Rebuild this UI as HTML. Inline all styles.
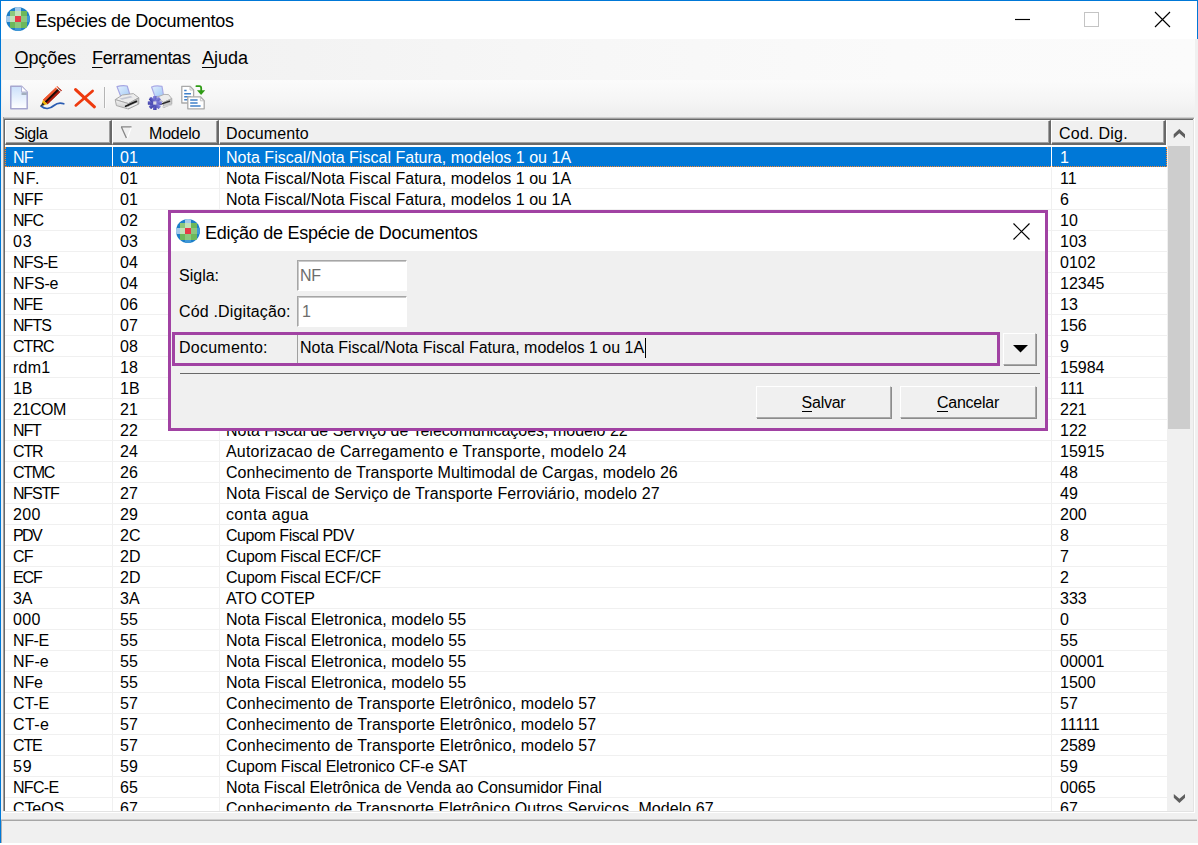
<!DOCTYPE html>
<html lang="pt-BR">
<head>
<meta charset="utf-8">
<title>Espécies de Documentos</title>
<style>
*{box-sizing:border-box;margin:0;padding:0}
html,body{width:1198px;height:845px;overflow:hidden;background:#fff}
body{position:relative;font-family:"Liberation Sans","DejaVu Sans",sans-serif;color:#000;font-size:16px}
.abs{position:absolute}
/* main window frame */
#frameL{left:0;top:0;width:1px;height:843px;background:#0078d7}
#frameT{left:0;top:0;width:1198px;height:1px;background:#0078d7}
#frameR{left:1197px;top:0;width:1px;height:39px;background:#0078d7}
#client{left:1px;top:39px;width:1197px;height:804px;background:#f0f0f0}
#title{left:35.5px;top:9px;height:24px;line-height:24px;font-size:18px;white-space:nowrap;letter-spacing:-0.27px}
#menubar{left:2px;top:39px;width:1193px;height:41px;background:linear-gradient(90deg,#f0f0f0 0%,#f3f3f3 25%,#f7f7f7 50%,#fafafa 75%,#fbfbfb 100%)}
.mi{position:absolute;top:46px;height:24px;line-height:24px;font-size:18px;white-space:nowrap}
.mi u{text-decoration:underline;text-decoration-thickness:1px;text-underline-offset:3px}
#toolbar{left:2px;top:80px;width:1193px;height:37px;background:linear-gradient(180deg,#fbfbfb 0%,#f6f6f6 50%,#eeeeee 100%)}
/* grid */
#grid{left:3px;top:117px;width:1191px;height:695px;background:#fff;border-top:3px solid #696969;border-left:2px solid #696969;border-right:1px solid #fff;border-bottom:1px solid #fff;overflow:hidden}
#gridTop{left:3px;top:117px;width:1191px;height:2px;background:linear-gradient(#cfcfcf 0,#cfcfcf 50%,#a0a0a0 50%,#a0a0a0 100%)}
#gridLeft{left:3px;top:117px;width:1px;height:695px;background:#a0a0a0}
.hd{position:absolute;top:120px;height:25px;background:#f0f0f0;border-top:1px solid #fff;border-left:1px solid #fff;border-right:2px solid #696969;border-bottom:2px solid #696969;box-shadow:inset -1px -1px 0 #a0a0a0;font-size:16px;line-height:26px;white-space:nowrap;overflow:hidden}
.r{position:absolute;left:5px;width:1162px;height:21px;border-bottom:1px solid #f0f0f0;background:#fff;white-space:nowrap}
.c{position:absolute;top:0;height:20px;line-height:22px;font-size:16px;overflow:hidden;white-space:nowrap;padding-left:9px}
.c1{left:0;width:107px;letter-spacing:-0.5px;padding-left:8px}
.c2{left:107px;width:107px;border-left:1px solid #f0f0f0;padding-left:7px}
.c3{left:214px;width:832px;border-left:1px solid #f0f0f0;padding-left:6px}
.c4{left:1046px;width:116px;border-left:1px solid #f0f0f0;padding-left:8px}
.sel{background:#0078d7;color:#fff;border-bottom:1px solid #fff}
.sel .c{border-left-color:#fff}
.sel:after{content:"";position:absolute;left:0;top:0;right:0;bottom:0;border:1px dotted #ff8728;border-top:none;pointer-events:none}
#sbar{left:1167px;top:120px;width:26px;height:691px;background:#f0f0f0}
#thumb{left:1168px;top:146px;width:22px;height:283px;background:#cdcdcd}
#status{left:1px;top:819px;width:1196px;height:24px;background:#f0f0f0;border-top:2px solid #a6a6a6;border-left:1px solid #b0b0b0}
#statusTop{left:1px;top:819px;width:1196px;height:1px;background:#cfcfcf}
/* dialog */
#dlg{left:168px;top:210px;width:880px;height:221px;background:#f0f0f0;border:3px solid #a142a3}
#dtitlebar{left:171px;top:213px;width:874px;height:38px;background:#fff}
#dtitle{left:205px;top:221px;height:24px;line-height:24px;font-size:18px;white-space:nowrap;letter-spacing:-0.25px}
.lbl{position:absolute;left:179px;height:20px;line-height:20px;font-size:16px;white-space:nowrap}
.inp{position:absolute;left:297px;width:110px;height:31px;background:#fff;border-top:1px solid #a6a6a6;border-left:1px solid #a6a6a6;border-right:1px solid #fff;border-bottom:1px solid #fff;box-shadow:inset 1px 1px 0 #c9c9c9;font-size:16px;line-height:29px;color:#6d6d6d;padding-left:3px}
#docbox{left:172px;top:332px;width:828px;height:34px;border:3px solid #a142a3;background:#f0f0f0}
#docdiv{left:297px;top:335px;width:1px;height:28px;background:#a0a0a0}
#doctext{left:300px;top:337px;height:22px;line-height:22px;font-size:16px;white-space:nowrap}
#caret{left:645px;top:338px;width:1px;height:20px;background:#000}
#ddbtn{left:1003px;top:333px;width:33px;height:32px;background:#f0f0f0;border-top:1px solid #fff;border-left:1px solid #fff;border-right:1px solid #a8a8a8;border-bottom:1px solid #a8a8a8;box-shadow:1px 1px 0 #8c8c8c}
#hline{left:180px;top:373px;width:860px;height:1px;background:#696969}
.btn{position:absolute;top:386px;height:32px;background:#f0f0f0;border-top:1px solid #fff;border-left:1px solid #fff;border-right:1px solid #a8a8a8;border-bottom:1px solid #a8a8a8;box-shadow:1px 1px 0 #8c8c8c;letter-spacing:-0.25px;font-size:16px;line-height:31px;text-align:center;white-space:nowrap}
.btn u{text-decoration:none;border-bottom:1px solid #000}
</style>
</head>
<body>
<div class="abs" id="client"></div>
<div class="abs" id="frameT"></div>
<div class="abs" id="frameL"></div>
<div class="abs" id="frameR"></div>

<!-- title bar -->
<svg class="abs" style="left:6px;top:7px" width="24" height="24" viewBox="0 0 24 24">
 <defs><clipPath id="gc"><circle cx="12" cy="12" r="12"/></clipPath></defs>
 <g clip-path="url(#gc)">
  <rect x="0" y="0" width="24" height="24" fill="#1c7fc8"/>
  <rect x="9" y="0" width="6" height="4" fill="#a3c9ea"/>
  <rect x="0" y="9" width="4" height="6" fill="#a3c9ea"/>
  <rect x="21" y="9" width="3" height="6" fill="#3f97d6"/>
  <rect x="9" y="21" width="6" height="3" fill="#3f97d6"/>
  <rect x="4" y="4" width="5" height="5" fill="#8cc77c"/>
  <rect x="9" y="4" width="6" height="5" fill="#c1e2ba"/>
  <rect x="15" y="4" width="6" height="5" fill="#6db85a"/>
  <rect x="4" y="9" width="5" height="6" fill="#c1e2ba"/>
  <rect x="9" y="9" width="6" height="6" fill="#e63a46"/>
  <rect x="15" y="9" width="6" height="6" fill="#8cc77c"/>
  <rect x="4" y="15" width="5" height="6" fill="#6db85a"/>
  <rect x="9" y="15" width="6" height="6" fill="#8cc77c"/>
  <rect x="15" y="15" width="6" height="6" fill="#6db85a"/>
 </g>
</svg>
<div class="abs" id="title">Espécies de Documentos</div>
<!-- caption buttons -->
<svg class="abs" style="left:1010px;top:8px" width="170" height="24" viewBox="0 0 170 24">
 <line x1="5" y1="11.5" x2="20" y2="11.5" stroke="#000" stroke-width="1.15"/>
 <rect x="74.5" y="4.5" width="14" height="14" fill="none" stroke="#c4c4c4" stroke-width="1"/>
 <path d="M145 4 L160 19 M160 4 L145 19" stroke="#000" stroke-width="1.15" fill="none"/>
</svg>

<!-- menu bar -->
<div class="abs" id="menubar"></div>
<div class="mi" style="left:14.5px;letter-spacing:-0.1px"><u>O</u>pções</div>
<div class="mi" style="left:92px;letter-spacing:-0.33px"><u>F</u>erramentas</div>
<div class="mi" style="left:202px"><u>A</u>juda</div>

<!-- toolbar -->
<div class="abs" id="toolbar"></div>
<!--TB0-->
<svg class="abs" style="left:0;top:80px" width="220" height="37" viewBox="0 80 220 37">
 <defs>
  <linearGradient id="gdoc" x1="0" y1="0" x2="0" y2="1"><stop offset="0" stop-color="#cbe0fb"/><stop offset="1" stop-color="#ffffff"/></linearGradient>
  <linearGradient id="gpap" x1="0" y1="0" x2="1" y2="1"><stop offset="0" stop-color="#e4f0fd"/><stop offset="1" stop-color="#9ec7f6"/></linearGradient>
  <linearGradient id="gprn" x1="0" y1="0" x2="0" y2="1"><stop offset="0" stop-color="#f4f4f4"/><stop offset="1" stop-color="#c9c9c9"/></linearGradient>
  <linearGradient id="ggear" x1="0" y1="0" x2="1" y2="1"><stop offset="0" stop-color="#8e8ee6"/><stop offset="1" stop-color="#3838a4"/></linearGradient>
 </defs>
 <!-- new document -->
 <path d="M10.8 86.3 H21.5 L27.2 92 V108.7 H10.8 Z" fill="url(#gdoc)" stroke="#a6a6cf" stroke-width="1.5" stroke-linejoin="round"/>
 <path d="M21.5 86.5 V92 H27" fill="#fff" stroke="#b4b4d6" stroke-width="1"/>
 <path d="M21.5 92.6 H26.6 V95 H21.5 Z" fill="#8f9ba8" opacity="0.75"/>
 <!-- pencil -->
 <g>
  <path d="M41 106 C45 109.5 50 109 54 105.5 C57 103 60.5 102.6 63.8 103.8" fill="none" stroke="#2a5cb2" stroke-width="1.7" stroke-linecap="round"/>
  <path d="M57.2 86.2 L61.8 90.6 L47.6 104.2 L43 99.8 Z" fill="#dd3a1c"/>
  <path d="M57.2 86.2 L59 87.9 L44.8 101.5 L43 99.8 Z" fill="#f2582f"/>
  <path d="M60 88.9 L61.8 90.6 L47.6 104.2 L45.8 102.5 Z" fill="#a81e12"/>
  <path d="M58.6 89.3 L46 101.6" stroke="#1a0b08" stroke-width="2" stroke-linecap="round"/>
  <path d="M56.2 87.2 L60.8 91.6" stroke="#ffffff" stroke-width="1.1" opacity="0.9"/>
  <path d="M43 99.8 L47.6 104.2 L41.2 105.8 Z" fill="#f0b400"/>
  <path d="M42.6 102.6 L44.6 104.9 L40.6 106.2 Z" fill="#2b2b3a"/>
 </g>
 <!-- delete X -->
 <path d="M75.6 89.6 L94.4 106.8" stroke="#ee3a0e" stroke-width="3.1" stroke-linecap="round"/>
 <path d="M92.6 91 L75.8 105.4" stroke="#ee3a0e" stroke-width="2.7" stroke-linecap="round"/>
 <!-- separator -->
 <rect x="104" y="87" width="1" height="21" fill="#b5b5b5"/>
 <rect x="105" y="87" width="1" height="21" fill="#fbfbfb"/>
 <!-- printer -->
 <g>
  <path d="M117 86.6 Q122 85.2 127.2 86 L130.4 96.4 L121.6 98.6 Z" fill="url(#gpap)" stroke="#a5a5e2" stroke-width="1.2" stroke-linejoin="round"/>
  <path d="M115.2 99.6 L122.4 95 L133.4 93.6 L138.8 97.8 L128.4 103.6 Z" fill="#ececec" stroke="#a2a2a2" stroke-width="0.9" stroke-linejoin="round"/>
  <path d="M119.6 98.4 L130.6 96 L132.6 97.2 L122 99.8 Z" fill="#c3c6d2"/>
  <path d="M115.2 99.6 L128.4 103.6 V109 L116.4 105.6 Z" fill="url(#gprn)" stroke="#a2a2a2" stroke-width="0.9" stroke-linejoin="round"/>
  <path d="M128.4 103.6 L138.8 97.8 V104 L128.4 109 Z" fill="#c4c4c4" stroke="#a2a2a2" stroke-width="0.9" stroke-linejoin="round"/>
  <path d="M125.6 106.2 L136.4 101.4" stroke="#1c1c1c" stroke-width="1.7" stroke-linecap="round"/>
  <path d="M127.6 107.8 L136.6 103.6" stroke="#f3f3f3" stroke-width="1.2" stroke-linecap="round"/>
 </g>
 <!-- printer with gear -->
 <g>
  <path d="M151.6 87 Q156 85 162 86.4 L163.6 96 L155 96.6 Z" fill="url(#gpap)" stroke="#aaaae6" stroke-width="1.2" stroke-linejoin="round"/>
  <path d="M156.6 97.4 L164 94.4 L168.6 94.6 L171.8 98.6 L163.6 102.4 Z" fill="#ececec" stroke="#aaaaaa" stroke-width="0.9" stroke-linejoin="round"/>
  <path d="M163.6 102.4 L171.8 98.6 V104.2 L163.6 107.6 Z" fill="#cbcbcb" stroke="#aaaaaa" stroke-width="0.9" stroke-linejoin="round"/>
  <path d="M160.4 104.4 L169.6 101.2" stroke="#2a2a2a" stroke-width="1.5" stroke-linecap="round"/>
  <path d="M162.6 106.8 L171.6 105" stroke="#d8d8d8" stroke-width="1.2" stroke-linecap="round"/>
  <g transform="translate(154.8 103)">
   <g fill="url(#ggear)">
    <circle r="5"/>
    <rect x="-1.8" y="-7" width="3.6" height="14" rx="0.6"/>
    <rect x="-1.8" y="-7" width="3.6" height="14" rx="0.6" transform="rotate(45)"/>
    <rect x="-1.8" y="-7" width="3.6" height="14" rx="0.6" transform="rotate(90)"/>
    <rect x="-1.8" y="-7" width="3.6" height="14" rx="0.6" transform="rotate(135)"/>
   </g>
   <rect x="-1.6" y="-1.6" width="3.2" height="3.2" fill="#dcdce6"/>
  </g>
 </g>
 <!-- copy documents -->
 <g>
  <path d="M181.8 86.3 H190 L193.6 89.9 V103 H181.8 Z" fill="#fff" stroke="#a9a9a9" stroke-width="1.3" stroke-linejoin="round"/>
  <path d="M190 86.6 V90 H193.4" fill="none" stroke="#bdbdbd" stroke-width="0.9"/>
  <path d="M184.2 90.6 H186.6 M184.2 93.7 H191 M184.2 96.8 H191 M184.2 99.8 H191" stroke="#3f80c9" stroke-width="1.5"/>
  <path d="M187.8 96.8 H200.4 L204.2 100.6 V108.8 H187.8 Z" fill="#fff" stroke="#a9a9a9" stroke-width="1.3" stroke-linejoin="round"/>
  <path d="M200.4 97.2 V100.8 H204" fill="none" stroke="#bdbdbd" stroke-width="0.9"/>
  <path d="M190.2 99.9 H197.6 M190.2 102.9 H197.6 M190.2 105.9 H200.6" stroke="#3f80c9" stroke-width="1.5"/>
  <path d="M196.4 86.2 H199.4 Q201.2 86.2 201.2 88.2 V90.4" fill="none" stroke="#2e9b14" stroke-width="1.8" stroke-linecap="round"/>
  <path d="M197 90.2 H205.2 L201.1 95 Z" fill="#2e9b14"/>
 </g>
</svg>
<!--TB1-->

<!-- grid -->
<div class="abs" id="grid"></div>
<div class="abs" id="gridTop"></div>
<div class="abs" id="gridLeft"></div>
<div class="hd" style="left:5px;width:107px;padding-left:8px;letter-spacing:-0.45px">Sigla</div>
<div class="hd" style="left:112px;width:107px;padding-left:36px;letter-spacing:-0.2px">Modelo</div>
<div class="hd" style="left:219px;width:832px;padding-left:6px;letter-spacing:0.1px">Documento</div>
<div class="hd" style="left:1051px;width:115px;padding-left:7px;letter-spacing:0.25px">Cod. Dig.</div>
<svg class="abs" style="left:120px;top:126px" width="12" height="13" viewBox="0 0 12 13">
 <path d="M1 0.8 H11.5 M1.4 1 L6.4 12" stroke="#858585" stroke-width="1.3" fill="none"/>
 <path d="M11.2 1.8 L7.4 11.8" stroke="#fff" stroke-width="1.1" fill="none"/>
</svg>
<div id="rows">
<div class="r sel" style="top:147px"><span class="c c1" style="letter-spacing:-0.7px">NF</span><span class="c c2">01</span><span class="c c3" style="letter-spacing:0.02px">Nota Fiscal/Nota Fiscal Fatura, modelos 1 ou 1A</span><span class="c c4">1</span></div>
<div class="r" style="top:168px"><span class="c c1" style="letter-spacing:1.2px">NF.</span><span class="c c2">01</span><span class="c c3" style="letter-spacing:0.02px">Nota Fiscal/Nota Fiscal Fatura, modelos 1 ou 1A</span><span class="c c4">11</span></div>
<div class="r" style="top:189px"><span class="c c1" style="letter-spacing:-0.45px">NFF</span><span class="c c2">01</span><span class="c c3" style="letter-spacing:0.02px">Nota Fiscal/Nota Fiscal Fatura, modelos 1 ou 1A</span><span class="c c4">6</span></div>
<div class="r" style="top:210px"><span class="c c1" style="letter-spacing:-0.95px">NFC</span><span class="c c2">02</span><span class="c c3">Nota Fiscal de Venda a Consumidor, modelo 2</span><span class="c c4">10</span></div>
<div class="r" style="top:231px"><span class="c c1" style="letter-spacing:0.9px">03</span><span class="c c2">03</span><span class="c c3">Nota Fiscal de Entrada, modelo 3</span><span class="c c4">103</span></div>
<div class="r" style="top:252px"><span class="c c1" style="letter-spacing:-0.68px">NFS-E</span><span class="c c2">04</span><span class="c c3">Nota Fiscal de Produtor, modelo 4</span><span class="c c4">0102</span></div>
<div class="r" style="top:273px"><span class="c c1" style="letter-spacing:-0.18px">NFS-e</span><span class="c c2">04</span><span class="c c3">Nota Fiscal de Produtor, modelo 4</span><span class="c c4">12345</span></div>
<div class="r" style="top:294px"><span class="c c1" style="letter-spacing:-0.95px">NFE</span><span class="c c2">06</span><span class="c c3">Nota Fiscal/Conta de Energia Elétrica, modelo 6</span><span class="c c4">13</span></div>
<div class="r" style="top:315px"><span class="c c1" style="letter-spacing:-0.93px">NFTS</span><span class="c c2">07</span><span class="c c3">Nota Fiscal de Serviço de Transporte, modelo 7</span><span class="c c4">156</span></div>
<div class="r" style="top:336px"><span class="c c1" style="letter-spacing:-0.93px">CTRC</span><span class="c c2">08</span><span class="c c3">Conhecimento de Transporte Rodoviário de Cargas, modelo 8</span><span class="c c4">9</span></div>
<div class="r" style="top:357px"><span class="c c1" style="letter-spacing:0.27px">rdm1</span><span class="c c2">18</span><span class="c c3">Resumo de Movimento Diário, modelo 18</span><span class="c c4">15984</span></div>
<div class="r" style="top:378px"><span class="c c1" style="letter-spacing:-0.1px">1B</span><span class="c c2">1B</span><span class="c c3">Nota Fiscal Avulsa, modelo 1B</span><span class="c c4">111</span></div>
<div class="r" style="top:399px"><span class="c c1" style="letter-spacing:-0.45px">21COM</span><span class="c c2">21</span><span class="c c3">Nota Fiscal de Serviço de Comunicação, modelo 21</span><span class="c c4">221</span></div>
<div class="r" style="top:420px"><span class="c c1" style="letter-spacing:-1.15px">NFT</span><span class="c c2">22</span><span class="c c3">Nota Fiscal de Serviço de Telecomunicações, modelo 22</span><span class="c c4">122</span></div>
<div class="r" style="top:441px"><span class="c c1" style="letter-spacing:-1.15px">CTR</span><span class="c c2">24</span><span class="c c3" style="letter-spacing:0.18px">Autorizacao de Carregamento e Transporte, modelo 24</span><span class="c c4">15915</span></div>
<div class="r" style="top:462px"><span class="c c1" style="letter-spacing:-1.27px">CTMC</span><span class="c c2">26</span><span class="c c3" style="letter-spacing:0.03px">Conhecimento de Transporte Multimodal de Cargas, modelo 26</span><span class="c c4">48</span></div>
<div class="r" style="top:483px"><span class="c c1" style="letter-spacing:-1.2px">NFSTF</span><span class="c c2">27</span><span class="c c3" style="letter-spacing:0.1px">Nota Fiscal de Serviço de Transporte Ferroviário, modelo 27</span><span class="c c4">49</span></div>
<div class="r" style="top:504px"><span class="c c1" style="letter-spacing:0.4px">200</span><span class="c c2">29</span><span class="c c3" style="letter-spacing:0.36px">conta agua</span><span class="c c4">200</span></div>
<div class="r" style="top:525px"><span class="c c1" style="letter-spacing:-1.6px">PDV</span><span class="c c2">2C</span><span class="c c3" style="letter-spacing:-0.45px">Cupom Fiscal PDV</span><span class="c c4">8</span></div>
<div class="r" style="top:546px"><span class="c c1" style="letter-spacing:-0.7px">CF</span><span class="c c2">2D</span><span class="c c3" style="letter-spacing:-0.28px">Cupom Fiscal ECF/CF</span><span class="c c4">7</span></div>
<div class="r" style="top:567px"><span class="c c1" style="letter-spacing:-1.15px">ECF</span><span class="c c2">2D</span><span class="c c3" style="letter-spacing:-0.28px">Cupom Fiscal ECF/CF</span><span class="c c4">2</span></div>
<div class="r" style="top:588px"><span class="c c1" style="letter-spacing:-0.1px">3A</span><span class="c c2">3A</span><span class="c c3" style="letter-spacing:-0.25px">ATO COTEP</span><span class="c c4">333</span></div>
<div class="r" style="top:609px"><span class="c c1" style="letter-spacing:0.4px">000</span><span class="c c2">55</span><span class="c c3" style="letter-spacing:0.03px">Nota Fiscal Eletronica, modelo 55</span><span class="c c4">0</span></div>
<div class="r" style="top:630px"><span class="c c1" style="letter-spacing:-0.4px">NF-E</span><span class="c c2">55</span><span class="c c3" style="letter-spacing:0.03px">Nota Fiscal Eletronica, modelo 55</span><span class="c c4">55</span></div>
<div class="r" style="top:651px"><span class="c c1" style="letter-spacing:0.07px">NF-e</span><span class="c c2">55</span><span class="c c3" style="letter-spacing:0.03px">Nota Fiscal Eletronica, modelo 55</span><span class="c c4">00001</span></div>
<div class="r" style="top:672px"><span class="c c1" style="letter-spacing:-0.15px">NFe</span><span class="c c2">55</span><span class="c c3" style="letter-spacing:0.03px">Nota Fiscal Eletronica, modelo 55</span><span class="c c4">1500</span></div>
<div class="r" style="top:693px"><span class="c c1" style="letter-spacing:-0.07px">CT-E</span><span class="c c2">57</span><span class="c c3" style="letter-spacing:0.1px">Conhecimento de Transporte Eletrônico, modelo 57</span><span class="c c4">57</span></div>
<div class="r" style="top:714px"><span class="c c1" style="letter-spacing:0.4px">CT-e</span><span class="c c2">57</span><span class="c c3" style="letter-spacing:0.1px">Conhecimento de Transporte Eletrônico, modelo 57</span><span class="c c4">11111</span></div>
<div class="r" style="top:735px"><span class="c c1" style="letter-spacing:-1.15px">CTE</span><span class="c c2">57</span><span class="c c3" style="letter-spacing:0.1px">Conhecimento de Transporte Eletrônico, modelo 57</span><span class="c c4">2589</span></div>
<div class="r" style="top:756px"><span class="c c1" style="letter-spacing:0.9px">59</span><span class="c c2">59</span><span class="c c3" style="letter-spacing:-0.2px">Cupom Fiscal Eletronico CF-e SAT</span><span class="c c4">59</span></div>
<div class="r" style="top:777px"><span class="c c1" style="letter-spacing:-0.68px">NFC-E</span><span class="c c2">65</span><span class="c c3" style="letter-spacing:-0.08px">Nota Fiscal Eletrônica de Venda ao Consumidor Final</span><span class="c c4">0065</span></div>
<div class="r" style="top:798px"><span class="c c1" style="letter-spacing:-0.1px">CTeOS</span><span class="c c2">67</span><span class="c c3" style="letter-spacing:0.06px">Conhecimento de Transporte Eletrônico Outros Serviços, Modelo 67</span><span class="c c4">67</span></div>
</div>
<div class="abs" style="left:2px;top:811px;width:1194px;height:34px;background:#f0f0f0"></div>
<div class="abs" style="left:5px;top:811px;width:1189px;height:1px;background:#e3e3e3"></div>
<div class="abs" style="left:3px;top:812px;width:1192px;height:1px;background:#fff"></div>
<div class="abs" id="sbar"></div>
<div class="abs" id="thumb"></div>
<svg class="abs" style="left:1172px;top:128px" width="14" height="11" viewBox="1172 128 14 11"><path d="M1173.7 134.3 L1179.3 129.1 L1185 134.3 V138.3 L1179.3 133.3 L1173.7 138.3 Z" fill="#5e5e5e"/></svg>
<svg class="abs" style="left:1172px;top:792px" width="14" height="12" viewBox="1172 792 14 12"><path d="M1173.8 793.9 L1179.4 798.7 L1185 793.9 V797.8 L1179.4 802.9 L1173.8 797.8 Z" fill="#5e5e5e"/></svg>
<div class="abs" style="left:1195px;top:80px;width:3px;height:765px;background:#f0f0f0"></div>
<div class="abs" style="left:1193px;top:120px;width:1px;height:692px;background:#e3e3e3"></div>
<div class="abs" style="left:1194px;top:118px;width:1px;height:695px;background:#fff"></div>

<!-- status bar -->
<div class="abs" id="status"></div>
<div class="abs" id="statusTop"></div>
<div class="abs" style="left:0;top:843px;width:1198px;height:2px;background:#fff"></div>

<!-- dialog -->
<div class="abs" id="dlg"></div>
<div class="abs" id="dtitlebar"></div>
<svg class="abs" style="left:176px;top:219px" width="24" height="24" viewBox="0 0 24 24">
 <g clip-path="url(#gc)">
  <rect x="0" y="0" width="24" height="24" fill="#1c7fc8"/>
  <rect x="9" y="0" width="6" height="4" fill="#a3c9ea"/>
  <rect x="0" y="9" width="4" height="6" fill="#a3c9ea"/>
  <rect x="21" y="9" width="3" height="6" fill="#3f97d6"/>
  <rect x="9" y="21" width="6" height="3" fill="#3f97d6"/>
  <rect x="4" y="4" width="5" height="5" fill="#8cc77c"/>
  <rect x="9" y="4" width="6" height="5" fill="#c1e2ba"/>
  <rect x="15" y="4" width="6" height="5" fill="#6db85a"/>
  <rect x="4" y="9" width="5" height="6" fill="#c1e2ba"/>
  <rect x="9" y="9" width="6" height="6" fill="#e63a46"/>
  <rect x="15" y="9" width="6" height="6" fill="#8cc77c"/>
  <rect x="4" y="15" width="5" height="6" fill="#6db85a"/>
  <rect x="9" y="15" width="6" height="6" fill="#8cc77c"/>
  <rect x="15" y="15" width="6" height="6" fill="#6db85a"/>
 </g>
</svg>
<div class="abs" id="dtitle">Edição de Espécie de Documentos</div>
<svg class="abs" style="left:1013px;top:223px" width="17" height="17" viewBox="0 0 17 17"><path d="M0.5 0.5 L16.5 16.5 M16.5 0.5 L0.5 16.5" stroke="#000" stroke-width="1.2" fill="none"/></svg>

<div class="lbl" style="top:266px">Sigla:</div>
<div class="inp" style="top:260px;padding-left:2px;letter-spacing:-0.3px">NF</div>
<div class="lbl" style="top:302px;letter-spacing:0.15px">Cód .Digitação:</div>
<div class="inp" style="top:296px;padding-left:4px">1</div>
<div class="abs" id="docbox"></div>
<div class="lbl" style="top:338px;letter-spacing:0.25px">Documento:</div>
<div class="abs" id="docdiv"></div>
<div class="abs" id="doctext">Nota Fiscal/Nota Fiscal Fatura, modelos 1 ou 1A</div>
<div class="abs" id="caret"></div>
<div class="abs" id="ddbtn"></div>
<svg class="abs" style="left:1013px;top:345px" width="15" height="8" viewBox="0 0 15 8"><path d="M0 0 H15 L7.5 7.5 Z" fill="#000"/></svg>
<div class="abs" id="hline"></div>
<div class="btn" style="left:756px;width:135px"><u>S</u>alvar</div>
<div class="btn" style="left:900px;width:136px"><u>C</u>ancelar</div>
</body>
</html>
